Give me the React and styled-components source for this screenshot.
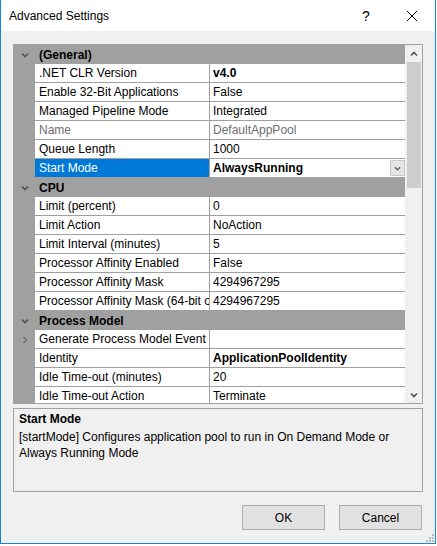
import React from "react";
import styled, { createGlobalStyle } from "styled-components";

const GlobalStyle = createGlobalStyle`
  body {
    margin: 0;
    background: #ffffff;
    font-family: "Liberation Sans", Arial, sans-serif;
    font-size: 12px;
    color: #000;
  }
`;

const sections = [
  {
    title: "(General)",
    rows: [
      { name: ".NET CLR Version", value: "v4.0", bold: true },
      { name: "Enable 32-Bit Applications", value: "False" },
      { name: "Managed Pipeline Mode", value: "Integrated" },
      { name: "Name", value: "DefaultAppPool", disabled: true },
      { name: "Queue Length", value: "1000" },
      { name: "Start Mode", value: "AlwaysRunning", bold: true, selected: true },
    ],
  },
  {
    title: "CPU",
    rows: [
      { name: "Limit (percent)", value: "0" },
      { name: "Limit Action", value: "NoAction" },
      { name: "Limit Interval (minutes)", value: "5" },
      { name: "Processor Affinity Enabled", value: "False" },
      { name: "Processor Affinity Mask", value: "4294967295" },
      { name: "Processor Affinity Mask (64-bit option)", value: "4294967295" },
    ],
  },
  {
    title: "Process Model",
    rows: [
      { name: "Generate Process Model Event Log Entry", value: "", expandable: true },
      { name: "Identity", value: "ApplicationPoolIdentity", bold: true },
      { name: "Idle Time-out (minutes)", value: "20" },
      { name: "Idle Time-out Action", value: "Terminate" },
      { name: "Load User Profile", value: "True" },
    ],
  },
];

const Chevron = ({ dir = "down", color = "#505050", size = 8 }) => {
  const d = {
    down: "M1 2.5 L4 5.5 L7 2.5",
    up: "M1 5.5 L4 2.5 L7 5.5",
    right: "M2.5 1 L5.5 4 L2.5 7",
  }[dir];
  return (
    <svg width={size} height={size} viewBox="0 0 8 8">
      <path d={d} fill="none" stroke={color} strokeWidth="1.6" />
    </svg>
  );
};

const App = () => (
  <>
    <GlobalStyle />
    <Window>
      <TitleBar>
        <Title>Advanced Settings</Title>
        <Help>?</Help>
        <Close>
          <svg width="10" height="10" viewBox="0 0 10 10">
            <path d="M0 0 L10 10 M10 0 L0 10" stroke="#000" strokeWidth="1" />
          </svg>
        </Close>
      </TitleBar>
      <Body>
        <Grid>
          <Rows>
            {sections.map((s) => (
              <React.Fragment key={s.title}>
                <Category>
                  <Margin>
                    <Chevron dir="down" />
                  </Margin>
                  <CategoryTitle>{s.title}</CategoryTitle>
                </Category>
                {s.rows.map((r) => (
                  <Row key={r.name}>
                    <Margin>
                      {r.expandable && <Chevron dir="right" color="#707070" />}
                    </Margin>
                    <NameCell $selected={r.selected} $disabled={r.disabled}>
                      {r.name}
                    </NameCell>
                    <ValueCell $bold={r.bold} $disabled={r.disabled}>
                      <span>{r.value}</span>
                      {r.selected && (
                        <DropButton>
                          <Chevron dir="down" color="#606060" size={7} />
                        </DropButton>
                      )}
                    </ValueCell>
                  </Row>
                ))}
              </React.Fragment>
            ))}
          </Rows>
          <ScrollBar>
            <ScrollArrow>
              <Chevron dir="up" color="#505050" />
            </ScrollArrow>
            <Track>
              <Thumb />
            </Track>
            <ScrollArrow>
              <Chevron dir="down" color="#505050" />
            </ScrollArrow>
          </ScrollBar>
        </Grid>
        <Description>
          <DescTitle>Start Mode</DescTitle>
          <DescText>
            [startMode] Configures application pool to run in On Demand Mode or
            <br />
            Always Running Mode
          </DescText>
        </Description>
        <Buttons>
          <Button>OK</Button>
          <Button>Cancel</Button>
        </Buttons>
      </Body>
      <Grip>
        <svg width="8" height="8" viewBox="0 0 8 8">
          {[
            [6, 0],
            [3, 3],
            [6, 3],
            [0, 6],
            [3, 6],
            [6, 6],
          ].map(([x, y]) => (
            <rect key={`${x}-${y}`} x={x} y={y} width="2" height="2" fill="#b8b8b8" />
          ))}
        </svg>
      </Grip>
    </Window>
  </>
);

const Window = styled.div`
  position: relative;
  width: 436px;
  height: 544px;
  box-sizing: border-box;
  border: 1px solid #1883d7;
  border-top: none;
  background: #f0f0f0;
  display: flex;
  flex-direction: column;
`;

const TitleBar = styled.div`
  height: 31px;
  background: #ffffff;
  display: flex;
  align-items: center;
  padding-left: 8px;
  flex-shrink: 0;
`;

const Title = styled.div`
  flex: 1;
  font-size: 12px;
`;

const Help = styled.div`
  width: 46px;
  text-align: center;
  font-size: 14px;
  margin-right: 0;
  padding-left: 2px;
`;

const Close = styled.div`
  width: 46px;
  display: flex;
  justify-content: center;
  align-items: center;
`;

const Body = styled.div`
  flex: 1;
  padding: 13px 12px 0 12px;
  display: flex;
  flex-direction: column;
`;

const Grid = styled.div`
  height: 360px;
  box-sizing: border-box;
  border: 1px solid #a0a0a0;
  display: flex;
  background: #a0a0a0;
`;

const Rows = styled.div`
  flex: 1;
  overflow: hidden;
  background: #ffffff;
`;

const Category = styled.div`
  height: 19px;
  display: flex;
  align-items: center;
  background: #a0a0a0;
`;

const Margin = styled.div`
  width: 21px;
  height: 19px;
  flex-shrink: 0;
  display: flex;
  align-items: center;
  justify-content: center;
  background: #a0a0a0;
  padding-left: 1px;
  box-sizing: border-box;
`;

const CategoryTitle = styled.div`
  font-weight: bold;
  padding-left: 4px;
`;

const Row = styled.div`
  height: 19px;
  display: flex;
`;

const NameCell = styled.div`
  width: 175px;
  box-sizing: border-box;
  border-right: 1px solid #a0a0a0;
  border-bottom: 1px solid #a0a0a0;
  padding-left: 4px;
  white-space: nowrap;
  overflow: hidden;
  line-height: 18px;
  background: ${(p) => (p.$selected ? "#0078d7" : "#ffffff")};
  color: ${(p) => (p.$selected ? "#ffffff" : p.$disabled ? "#6d6d6d" : "#000")};
`;

const ValueCell = styled.div`
  flex: 1;
  display: flex;
  align-items: center;
  justify-content: space-between;
  border-bottom: 1px solid #a0a0a0;
  padding-left: 3px;
  white-space: nowrap;
  overflow: hidden;
  line-height: 18px;
  font-weight: ${(p) => (p.$bold ? "bold" : "normal")};
  color: ${(p) => (p.$disabled ? "#6d6d6d" : "#000")};
`;

const DropButton = styled.div`
  width: 15px;
  height: 16px;
  box-sizing: border-box;
  border: 1px solid #c8c8c8;
  background: #e5e5e5;
  display: flex;
  align-items: center;
  justify-content: center;
`;

const ScrollBar = styled.div`
  width: 17px;
  display: flex;
  flex-direction: column;
  background: #f0f0f0;
`;

const ScrollArrow = styled.div`
  height: 17px;
  display: flex;
  align-items: center;
  justify-content: center;
`;

const Track = styled.div`
  flex: 1;
`;

const Thumb = styled.div`
  height: 126px;
  margin: 0 1px 0 2px;
  background: #cdcdcd;
`;

const Description = styled.div`
  margin-top: 4px;
  height: 84px;
  box-sizing: border-box;
  border: 1px solid #a0a0a0;
  padding: 3px 5px;
`;

const DescTitle = styled.div`
  font-weight: bold;
  line-height: 15px;
  margin-bottom: 2px;
`;

const DescText = styled.div`
  line-height: 16px;
`;

const Buttons = styled.div`
  margin-top: 13px;
  display: flex;
  justify-content: flex-end;
  gap: 14px;
  padding-right: 1px;
`;

const Button = styled.button`
  width: 83px;
  height: 25px;
  box-sizing: border-box;
  border: 1px solid #adadad;
  background: #e1e1e1;
  font-family: "Liberation Sans", Arial, sans-serif;
  font-size: 12px;
  color: #000;
  padding: 0;
`;

const Grip = styled.div`
  position: absolute;
  right: 1px;
  bottom: 1px;
  width: 8px;
  height: 8px;
  display: flex;
`;

export default App;
